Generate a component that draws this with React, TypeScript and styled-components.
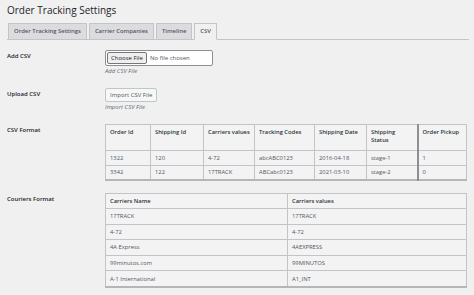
import React from 'react'
import styled, { createGlobalStyle } from 'styled-components'

const GlobalStyle = createGlobalStyle`
  html, body {
    margin: 0;
    padding: 0;
    background: #f0f0f1;
  }
  body {
    font-family: 'Open Sans', 'Noto Sans', sans-serif;
    color: #3c434a;
  }
`

const tabs = ['Order Tracking Settings', 'Carrier Companies', 'Timeline', 'CSV']

const csvHead = [
  { label: 'Order Id', width: 45 },
  { label: 'Shipping Id', width: 53 },
  { label: 'Carriers values', width: 51 },
  { label: 'Tracking Codes', width: 60 },
  { label: 'Shipping Date', width: 52 },
  { label: 'Shipping Status', width: 51 },
  { label: 'Order Pickup', width: 49 },
]

const csvRows = [
  ['1322', '120', '4-72', 'abcABC0123', '2016-04-18', 'stage-1', '1'],
  ['3342', '122', '17TRACK', 'ABCabc0123', '2021-03-10', 'stage-2', '0'],
]

const couriers = [
  ['17TRACK', '17TRACK'],
  ['4-72', '4-72'],
  ['4A Express', '4AEXPRESS'],
  ['99minutos.com', '99MINUTOS'],
  ['A-1 International', 'A1_INT'],
]

const App = () => {
  return (
    <Page>
      <GlobalStyle />
      <Title>Order Tracking Settings</Title>
      <TabBar>
        {tabs.map((t) => (
          <Tab key={t} active={t === 'CSV'}>
            {t}
          </Tab>
        ))}
      </TabBar>

      <Form>
        <Row>
          <Label>Add CSV</Label>
          <Field>
            <FileInput>
              <ChooseBtn>Choose File</ChooseBtn>
              <span>No file chosen</span>
            </FileInput>
            <Hint>Add CSV File</Hint>
          </Field>
        </Row>

        <Row>
          <Label>Upload CSV</Label>
          <Field>
            <ImportBtn>Import CSV File</ImportBtn>
            <Hint>Import CSV File</Hint>
          </Field>
        </Row>

        <Row>
          <Label>CSV Format</Label>
          <Field>
            <Table>
              <colgroup>
                {csvHead.map((c) => (
                  <col key={c.label} style={{ width: c.width }} />
                ))}
              </colgroup>
              <thead>
                <tr>
                  {csvHead.map((c, i) => (
                    <Th key={c.label} divider={i === 6} tall>
                      {c.label}
                    </Th>
                  ))}
                </tr>
              </thead>
              <tbody>
                {csvRows.map((r, i) => (
                  <tr key={i}>
                    {r.map((v, j) => (
                      <Td key={j} divider={j === 6}>
                        {v}
                      </Td>
                    ))}
                  </tr>
                ))}
              </tbody>
            </Table>
          </Field>
        </Row>

        <Row>
          <Label>Couriers Format</Label>
          <Field>
            <Table>
              <colgroup>
                <col style={{ width: 182 }} />
                <col style={{ width: 179 }} />
              </colgroup>
              <thead>
                <tr>
                  <Th>Carriers Name</Th>
                  <Th>Carriers values</Th>
                </tr>
              </thead>
              <tbody>
                {couriers.map((r, i) => (
                  <CourierRow key={i}>
                    <Td>{r[0]}</Td>
                    <Td>{r[1]}</Td>
                  </CourierRow>
                ))}
              </tbody>
            </Table>
          </Field>
        </Row>
      </Form>
    </Page>
  )
}

export default App

const Page = styled.div`
  width: 474px;
  height: 295px;
  overflow: hidden;
  box-sizing: border-box;
  padding: 0 0 0 7px;
`

const Title = styled.h1`
  margin: 0;
  padding-top: 2px;
  font-size: 10px;
  line-height: 16px;
  font-weight: 400;
  color: #1d2327;
`

const TabBar = styled.div`
  display: flex;
  align-items: flex-end;
  gap: 2px;
  margin-top: 5px;
  padding-left: 1px;
  width: 461px;
  border-bottom: 1px solid #c3c4c7;
`

const Tab = styled.div<{ active?: boolean }>`
  height: 15px;
  line-height: 15px;
  padding: 0 5px;
  margin-bottom: -1px;
  font-size: 5.9px;
  font-weight: 600;
  color: #50575e;
  background: ${(p) => (p.active ? '#f0f0f1' : '#dcdcde')};
  border: 1px solid #c3c4c7;
  border-bottom-color: ${(p) => (p.active ? '#f0f0f1' : '#c3c4c7')};
  white-space: nowrap;
`

const Form = styled.div`
  display: flex;
  flex-direction: column;
  gap: 12px;
  margin-top: 10px;
`

const Row = styled.div`
  display: grid;
  grid-template-columns: 98px 1fr;
`

const Label = styled.div`
  padding-top: 2px;
  font-size: 6px;
  font-weight: 600;
  line-height: 9px;
  color: #1d2327;
`

const Field = styled.div`
  display: flex;
  flex-direction: column;
  align-items: flex-start;
`

const FileInput = styled.div`
  display: flex;
  align-items: center;
  gap: 3px;
  box-sizing: border-box;
  width: 108px;
  height: 16px;
  padding: 0 1px;
  background: #fff;
  border: 1px solid #8c8f94;
  border-radius: 2px;
  font-size: 6px;
  color: #50575e;
`

const ChooseBtn = styled.div`
  height: 12px;
  line-height: 11px;
  box-sizing: border-box;
  padding: 0 3px;
  background: #efefef;
  border: 1px solid #767676;
  border-radius: 2px;
  font-size: 6px;
  color: #1d2327;
`

const ImportBtn = styled.div`
  box-sizing: border-box;
  height: 14px;
  line-height: 12px;
  padding: 0 4px;
  background: #f6f7f7;
  border: 1px solid #c3c4c7;
  border-radius: 2px;
  font-size: 6px;
  color: #50575e;
`

const Hint = styled.div`
  margin-top: 1px;
  font-size: 6px;
  line-height: 9px;
  font-style: italic;
  color: #646970;
`

const Table = styled.table`
  width: 361px;
  table-layout: fixed;
  border-collapse: collapse;
  background: #f3f3f4;
  border: 1px solid #c3c4c7;
  border-bottom: 2px solid #b4b6b9;
  font-size: 5.8px;
`

const Th = styled.th<{ divider?: boolean; tall?: boolean }>`
  height: ${(p) => (p.tall ? '22px' : '14px')};
  padding: ${(p) => (p.tall ? '3px 4px 0' : '0 4px')};
  vertical-align: ${(p) => (p.tall ? 'top' : 'middle')};
  text-align: left;
  font-weight: 600;
  line-height: 8px;
  color: #2c3338;
  border: 1px solid #c3c4c7;
  ${(p) => (p.divider ? 'border-left: 2px solid #8c8f94;' : '')}
`

const Td = styled.td<{ divider?: boolean }>`
  height: 13.5px;
  padding: 0 4px;
  line-height: 8px;
  color: #50575e;
  border: 1px solid #c3c4c7;
  ${(p) => (p.divider ? 'border-left: 2px solid #8c8f94;' : '')}
`

const CourierRow = styled.tr`
  td {
    height: 14.6px;
  }
`
